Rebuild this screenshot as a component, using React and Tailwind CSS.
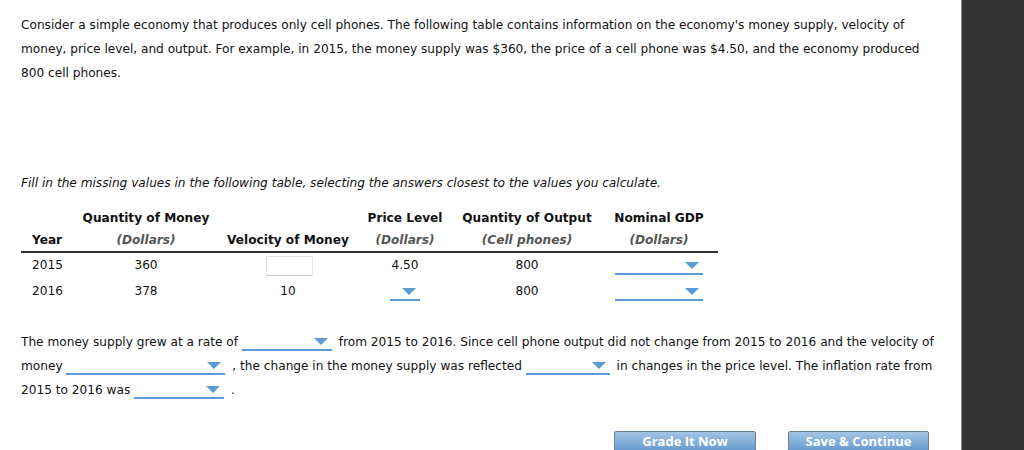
import React from 'react';

const font = { fontFamily: '"DejaVu Sans", Verdana, sans-serif' };

const Drop = ({ w }) => (
  <span className={`relative inline-block h-[17px] align-[-5px] border-b-2 border-[#5b9bd5] ${w}`}>
    <span className="absolute right-[4px] top-[4px] h-0 w-0 border-l-[7px] border-r-[7px] border-t-[7px] border-l-transparent border-r-transparent border-t-[#5b9bd5]" />
  </span>
);

const cols = 'grid grid-cols-[59px_132px_152px_82px_162px_102px_8px]';

const App = () => {
  return (
    <div className="flex h-[450px] w-[1024px] overflow-hidden bg-white text-[12.15px] text-[#111]" style={font}>
      <div className="w-[961px] shrink-0 px-[21px] pt-[13px]">
        <p className="leading-[24px]">
          Consider a simple economy that produces only cell phones. The following table contains information on the economy's money supply, velocity of
          <br />
          money, price level, and output. For example, in 2015, the money supply was $360, the price of a cell phone was $4.50, and the economy produced
          <br />
          800 cell phones.
        </p>

        <p className="mt-[86px] italic leading-[24px]">
          Fill in the missing values in the following table, selecting the answers closest to the values you calculate.
        </p>

        <div className="mt-[12px] w-[697px]">
          <div className={`${cols} h-[22px] items-center font-bold`}>
            <div />
            <div className="text-center">Quantity of Money</div>
            <div />
            <div className="text-center">Price Level</div>
            <div className="text-center">Quantity of Output</div>
            <div className="text-center">Nominal GDP</div>
            <div />
          </div>
          <div className={`${cols} h-[24px] items-center border-b-2 border-[#333] font-bold`}>
            <div className="pl-[11px]">Year</div>
            <div className="text-center italic text-[#555]">(Dollars)</div>
            <div className="text-center">Velocity of Money</div>
            <div className="text-center italic text-[#555]">(Dollars)</div>
            <div className="text-center italic text-[#555]">(Cell phones)</div>
            <div className="text-center italic text-[#555]">(Dollars)</div>
            <div />
          </div>
          <div className={`${cols} h-[25px] items-center`}>
            <div className="pl-[11px]">2015</div>
            <div className="text-center">360</div>
            <div className="flex justify-center">
              <div className="ml-[2px] h-[20px] w-[47px] border border-[#e2e2e2] border-b-[#c8c8c8]" />
            </div>
            <div className="text-center">4.50</div>
            <div className="text-center">800</div>
            <div className="flex justify-center pt-[2px]">
              <Drop w="w-[88px]" />
            </div>
            <div />
          </div>
          <div className={`${cols} h-[26px] items-center`}>
            <div className="pl-[11px]">2016</div>
            <div className="text-center">378</div>
            <div className="text-center">10</div>
            <div className="flex justify-center pt-[2px]">
              <Drop w="w-[30px]" />
            </div>
            <div className="text-center">800</div>
            <div className="flex justify-center pt-[2px]">
              <Drop w="w-[88px]" />
            </div>
            <div />
          </div>
        </div>

        <p className="mt-[26px] whitespace-nowrap leading-[24px]">
          The money supply grew at a rate of <Drop w="w-[90px]" /> <span className="ml-[3px]">from 2015 to 2016. Since cell phone output did not change from 2015 to 2016 and the velocity of</span>
          <br />
          money <Drop w="w-[159px]" /> <span className="ml-[3px]">, the change in the money supply was reflected</span> <Drop w="w-[84px]" /> <span className="ml-[3px]">in changes in the price level. The inflation rate from</span>
          <br />
          2015 to 2016 was <Drop w="w-[90px]" /> <span className="ml-[3px]">.</span>
        </p>

        <div className="mt-[29px] flex justify-end gap-[32px] pr-[11px]">
          <button
            className="h-[24px] w-[142px] rounded-[2px] border border-[#6f7f90] bg-gradient-to-b from-[#a3c4e6] to-[#5d94cb] pb-[3px] text-[13px] font-bold text-white"
            style={{ fontFamily: '"Open Sans", sans-serif' }}
          >
            Grade It Now
          </button>
          <button
            className="h-[24px] w-[141px] rounded-[2px] border border-[#6f7f90] bg-gradient-to-b from-[#a3c4e6] to-[#5d94cb] pb-[3px] text-[13px] font-bold text-white"
            style={{ fontFamily: '"Open Sans", sans-serif' }}
          >
            Save &amp; Continue
          </button>
        </div>
      </div>
      <div className="flex-1 border-l border-[#8a8a8a] bg-[#333]" />
    </div>
  );
};

export default App;
